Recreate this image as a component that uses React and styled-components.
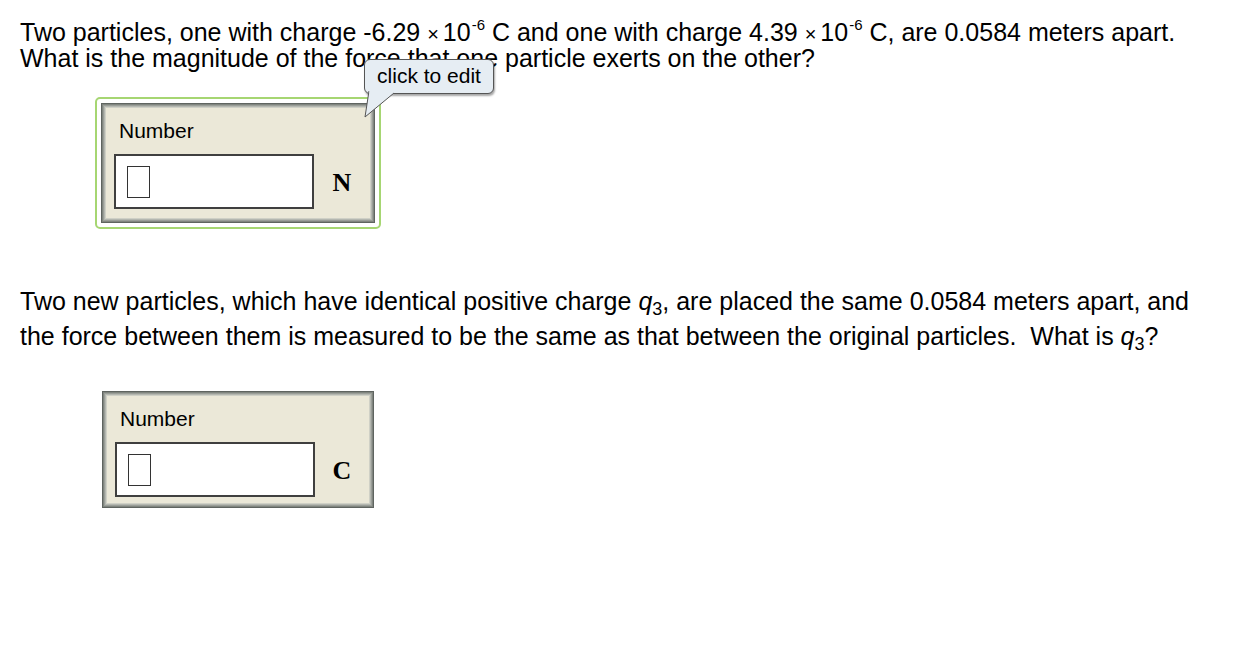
import React from "react";
import styled, { createGlobalStyle } from "styled-components";

const GlobalStyle = createGlobalStyle`
  body {
    margin: 0;
    background: #ffffff;
    font-family: "Liberation Sans", Arial, sans-serif;
    color: #000;
  }
`;

const Page = styled.div`
  position: relative;
  width: 1246px;
  height: 648px;
  padding: 20px 0 0 20px;
  box-sizing: border-box;
  overflow: hidden;
`;

const Question = styled.p`
  margin: ${(p) => p.$top || 0}px 0 0 0;
  font-size: 25px;
  line-height: ${(p) => p.$lh}px;
`;

const Sup = styled.sup`
  font-size: 15px;
  line-height: 0;
  vertical-align: 11px;
  margin-left: 1px;
`;

const Times = styled.span`
  font-size: 20px;
  margin-right: 4px;
`;

const Var = styled.i`
  font-style: italic;
`;

const Sub = styled.sub`
  font-size: 18px;
  line-height: 0;
  vertical-align: -5px;
`;

const Focus = styled.div`
  display: inline-block;
  margin: ${(p) => p.$top}px 0 0 ${(p) => p.$left}px;
  padding: ${(p) => (p.$active ? "4px" : "0")};
  border: ${(p) => (p.$active ? "2px solid #a6d672" : "none")};
  border-radius: 5px;
  background: #fff;
`;

const Panel = styled.div`
  box-sizing: border-box;
  width: ${(p) => p.$w}px;
  height: ${(p) => p.$h}px;
  background: #ebe8d8;
  border: 1px solid #5f6460;
  box-shadow: inset 0 0 0 1px #80857f, inset 0 0 0 2px #9a9e98,
    inset 0 0 0 3px #b4b7b0, inset 0 0 0 4px #cfd0c6;
  padding: 14px 0 0 12px;
`;

const Label = styled.div`
  font-size: 21px;
  line-height: 26px;
  margin-left: 5px;
`;

const Row = styled.div`
  display: flex;
  align-items: center;
  margin-top: 10px;
`;

const Field = styled.div`
  box-sizing: border-box;
  width: 200px;
  height: 55px;
  background: #fff;
  border: 2px solid #3f3f3f;
  padding: 10px 0 0 11px;
`;

const Caret = styled.div`
  box-sizing: border-box;
  width: 23px;
  height: 32px;
  border: 1px solid #333;
`;

const Unit = styled.div`
  flex: 1;
  text-align: center;
  font-family: "Liberation Serif", "Times New Roman", serif;
  font-weight: bold;
  font-size: 26px;
  padding: 2px 4px 0 0;
`;

const Bubble = styled.div`
  position: absolute;
  left: 364px;
  top: 59px;
  width: 130px;
  height: 35px;
  box-sizing: border-box;
  background: #e6edf3;
  border: 1px solid #555;
  border-radius: 6px;
  box-shadow: 1px 2px 2px rgba(0, 0, 0, 0.35);
  font-size: 21px;
  line-height: 32px;
  text-align: center;
`;

const Tail = styled.svg`
  position: absolute;
  left: -1px;
  top: 31px;
  overflow: visible;
`;

const Answer = ({ unit, active, top, left, w, h }) => (
  <Focus $active={active} $top={top} $left={left}>
    <Panel $w={w} $h={h}>
      <Label>Number</Label>
      <Row>
        <Field>
          <Caret />
        </Field>
        <Unit>{unit}</Unit>
      </Row>
    </Panel>
  </Focus>
);

export default function App() {
  return (
    <>
      <GlobalStyle />
      <Page>
        <Question $lh={24}>
          Two particles, one with charge -6.29 <Times>×</Times>10<Sup>-6</Sup> C
          and one with charge 4.39 <Times>×</Times>10<Sup>-6</Sup> C, are 0.0584
          meters apart.
          <br />
          What is the magnitude of the force that one particle exerts on the
          other?
        </Question>
        <Answer unit="N" active top={27} left={75} w={274} h={120} />
        <Question $lh={35} $top={55}>
          Two new particles, which have identical positive charge{" "}
          <Var>q</Var>
          <Sub>3</Sub>, are placed the same 0.0584 meters apart, and
          <br />
          the force between them is measured to be the same as that between the
          original particles.&nbsp; What is <Var>q</Var>
          <Sub>3</Sub>?
        </Question>
        <Answer unit="C" top={37} left={82} w={272} h={117} />
        <Bubble>
          click to edit
          <Tail width="32" height="26" viewBox="0 0 32 26">
            <path
              d="M5 0 L1 26 L30 2"
              fill="#e6edf3"
              stroke="#555"
              strokeWidth="1"
              strokeLinejoin="round"
            />
            <path d="M5.6 -2 L30 -2 L28 2.6 L5.4 2.6 Z" fill="#e6edf3" />
          </Tail>
        </Bubble>
      </Page>
    </>
  );
}
